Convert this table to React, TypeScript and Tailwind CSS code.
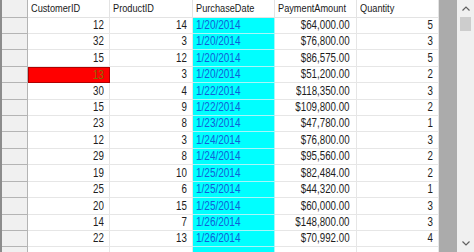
import React from "react";

const rows: (string | number)[][] = [
  [12, 14, "1/20/2014", "$64,000.00", 5],
  [32, 3, "1/20/2014", "$76,800.00", 3],
  [15, 12, "1/20/2014", "$86,575.00", 5],
  [13, 3, "1/20/2014", "$51,200.00", 2],
  [30, 4, "1/22/2014", "$118,350.00", 3],
  [15, 9, "1/22/2014", "$109,800.00", 2],
  [23, 8, "1/23/2014", "$47,780.00", 1],
  [12, 3, "1/24/2014", "$76,800.00", 3],
  [29, 8, "1/24/2014", "$95,560.00", 2],
  [19, 10, "1/25/2014", "$82,484.00", 2],
  [25, 6, "1/25/2014", "$44,320.00", 1],
  [20, 15, "1/25/2014", "$60,000.00", 3],
  [14, 7, "1/26/2014", "$148,800.00", 3],
  [22, 13, "1/26/2014", "$70,992.00", 4],
  ["", "", "", "", ""],
];

const font = { fontFamily: '"Liberation Sans", Arial, sans-serif' };

function R({ children }: { children: React.ReactNode }) {
  return <span className="inline-block origin-right scale-x-[0.78] whitespace-nowrap">{children}</span>;
}
function L({ children }: { children: React.ReactNode }) {
  return <span className="inline-block origin-left scale-x-[0.8] whitespace-nowrap">{children}</span>;
}

export default function App() {
  return (
    <div className="flex h-[252px] w-[474px] overflow-hidden bg-[#ababab]" style={font}>
      <div className="flex w-[457px] flex-col border-l-2 border-[#8c8c8c]">
        <div className="flex h-[17.5px] shrink-0 text-[11.5px] text-[#1a1a1a]">
          <div className="w-[26px] shrink-0 border-r border-b border-[#b4b4b4] bg-[#f0f0f0]" />
          {["CustomerID", "ProductID", "PurchaseDate", "PaymentAmount", "Quantity"].map((h, i) => (
            <div
              key={h}
              className={`flex items-center overflow-hidden border-r border-b border-[#e3e3e3] bg-white pl-[3px] ${i === 1 ? "w-[83px]" : "w-[82px]"}`}
            >
              <span className="inline-block origin-left scale-x-[0.8] whitespace-nowrap">{h}</span>
            </div>
          ))}
        </div>
        {rows.map((r, idx) => (
          <div key={idx} className="flex h-[16.43px] shrink-0 text-[12.5px] leading-none text-[#1e1e1e]">
            <div className="w-[26px] shrink-0 border-r border-b border-[#b4b4b4] bg-[#f0f0f0]" />
            <div
              className={`flex w-[82px] items-center justify-end pr-[5px] ${
                idx === 3 ? "border border-[#b00000] bg-[#ff0000] text-[#807000]" : "border-r border-b border-[#e6e6e6] bg-white"
              }`}
            >
              <R>{r[0]}</R>
            </div>
            <div className="flex w-[83px] items-center justify-end border-r border-b border-[#e6e6e6] bg-white pr-[5px]">
              <R>{r[1]}</R>
            </div>
            <div className="flex w-[82px] items-center border-r border-b border-[#a6f6f8] bg-[#00ffff] pl-[3px] text-[#1060d8]">
              <L>{r[2]}</L>
            </div>
            <div className="flex w-[82px] items-center justify-end border-r border-b border-[#e6e6e6] bg-white pr-[6px]">
              <R>{r[3]}</R>
            </div>
            <div className="flex w-[82px] items-center justify-end border-r border-b border-[#e6e6e6] bg-white pr-[5px]">
              <R>{r[4]}</R>
            </div>
          </div>
        ))}
      </div>
      <div className="flex w-[17px] flex-col items-center bg-[#f0f0f0]">
        <div className="flex h-[17px] w-full items-center justify-center">
          <svg width="8" height="5" viewBox="0 0 8 5">
            <path d="M0.5 4.5 L4 1 L7.5 4.5" fill="none" stroke="#606060" strokeWidth="1.2" />
          </svg>
        </div>
        <div className="h-[14px] w-[11px] bg-[#cdcdcd]" />
        <div className="flex-1" />
        <div className="flex h-[17px] w-full items-center justify-center">
          <svg width="8" height="5" viewBox="0 0 8 5">
            <path d="M0.5 0.5 L4 4 L7.5 0.5" fill="none" stroke="#606060" strokeWidth="1.2" />
          </svg>
        </div>
      </div>
    </div>
  );
}
